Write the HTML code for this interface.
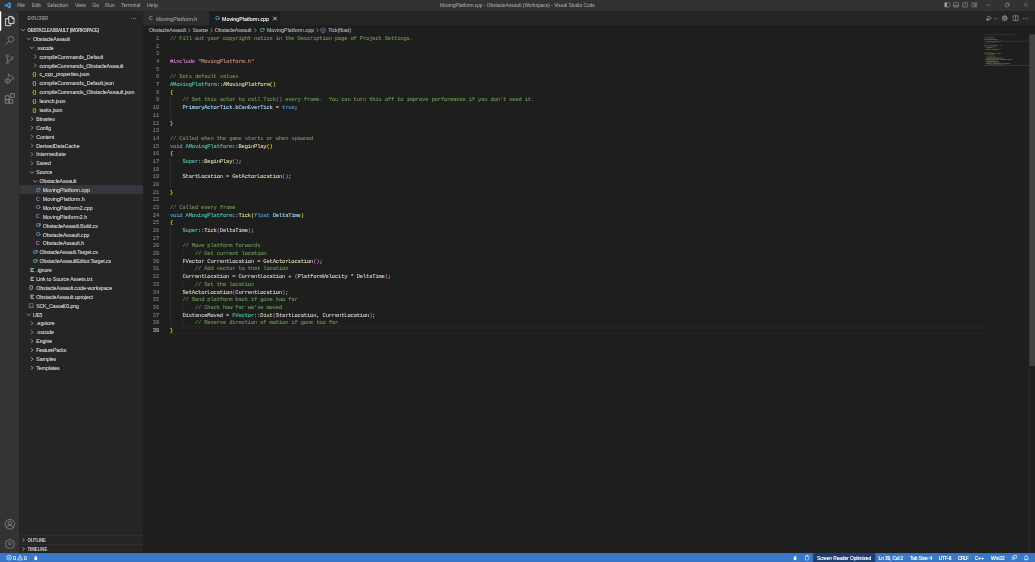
<!DOCTYPE html>
<html><head><meta charset="utf-8"><title>MovingPlatform.cpp - ObstacleAssault (Workspace) - Visual Studio Code</title>
<style>
html,body{margin:0;padding:0;background:#1e1e1e;overflow:hidden;width:1035px;height:562px}
#root{position:absolute;left:0;top:0;width:2560px;height:1390px;transform:scale(0.404296875);transform-origin:0 0;
 font-family:"Liberation Sans",sans-serif;font-size:13px;color:#cccccc;overflow:hidden;background:#1e1e1e}
#fg{position:absolute;left:0;top:0;width:2560px;height:1390px;will-change:opacity}
#root *{box-sizing:border-box}
.abs{position:absolute}
.t{position:absolute;white-space:pre;-webkit-text-stroke:0.35px}
.fi{position:absolute;height:22px;line-height:22px;width:18px;text-align:center;font-weight:bold;font-size:14px;white-space:nowrap}
.fi .sup{font-size:9px;position:relative;top:-3.5px;margin-left:-3.2px;margin-right:-3px;-webkit-text-stroke:0.5px}
.selrow{position:absolute;left:48px;width:305.5px;height:22px;background:#37373d}
.ln{position:absolute;left:352px;width:41.5px;text-align:right;height:19px;line-height:19px;font-family:"Liberation Mono",monospace;font-size:13.6px;letter-spacing:-0.461px;color:#858585;white-space:pre;margin-top:1px;-webkit-text-stroke:0.15px}
.ln.cur{color:#c6c6c6}
.cl{position:absolute;left:420.5px;height:19px;line-height:19px;font-family:"Liberation Mono",monospace;font-size:13.6px;letter-spacing:-0.461px;white-space:pre;color:#d4d4d4;margin-top:1px;-webkit-text-stroke:0.22px}
.ig{position:absolute;width:1px}
.curline{position:absolute;left:420px;width:2014px;height:19px;border-top:2px solid #282828;border-bottom:2px solid #282828}
</style></head><body><div id="root">
<!-- backgrounds -->
<div class="abs" style="left:0;top:0;width:2560px;height:28px;background:#323233"></div>
<div class="abs" style="left:0;top:28px;width:48px;height:1340px;background:#333333"></div>
<div class="abs" style="left:48px;top:28px;width:305.5px;height:1340px;background:#252526"></div>
<div class="abs" style="left:0;top:1368px;width:2560px;height:22px;background:#3a78c8"></div>
<div class="abs" style="left:2434px;top:161px;width:112px;height:2px;background:#23456a"></div>
<div class="abs" style="left:2546px;top:85px;width:1px;height:1283px;background:#3c3c3c"></div>
<div class="abs" style="left:2546px;top:85px;width:14px;height:820px;background:#424242"></div>
<div class="abs" style="left:0;top:28px;width:2.5px;height:48px;background:#ffffff"></div>
<div class="selrow" style="top:458.30px"></div>
<div class="abs" style="left:48px;top:1324px;width:305px;height:1px;background:#3c3c3c"></div>
<div class="abs" style="left:48px;top:1346px;width:305px;height:1px;background:#3c3c3c"></div>
<div class="abs" style="left:352px;top:28px;width:2208px;height:34.5px;background:#252526"></div>
<div class="abs" style="left:353.5px;top:28px;width:163.2px;height:34.5px;background:#2d2d2d"></div>
<div class="abs" style="left:517.5px;top:28px;width:175.3px;height:35.5px;background:#1e1e1e"></div>
<div class="curline" style="top:807px"></div>
<div class="abs" style="left:2010.7px;top:1368px;width:154.1px;height:22px;background:#1f3f6e"></div>
<div id="fg">
<!-- title bar -->
<svg class="abs" style="left:10.5px;top:5.0px" width="16.5" height="16.5" viewBox="0 0 100 100"><path d="M72 3 L96 14 V86 L72 97 L29 58 L11 72 L4 68 V32 L11 28 L29 42 Z M72 30 L44 50 L72 70 Z" fill="#3b9ff0" fill-rule="evenodd"/></svg>
<span class="t" style="left:42.5px;top:0.00px;height:27px;line-height:27px;font-size:13px;color:#a6a6a6;letter-spacing:-0.414px;-webkit-text-stroke:0.1px;">File</span>
<span class="t" style="left:78.9px;top:0.00px;height:27px;line-height:27px;font-size:13px;color:#a6a6a6;letter-spacing:-0.159px;-webkit-text-stroke:0.1px;">Edit</span>
<span class="t" style="left:116.3px;top:0.00px;height:27px;line-height:27px;font-size:13px;color:#a6a6a6;letter-spacing:-0.143px;-webkit-text-stroke:0.1px;">Selection</span>
<span class="t" style="left:185.5px;top:0.00px;height:27px;line-height:27px;font-size:13px;color:#a6a6a6;letter-spacing:-0.431px;-webkit-text-stroke:0.1px;">View</span>
<span class="t" style="left:228.1px;top:0.00px;height:27px;line-height:27px;font-size:13px;color:#a6a6a6;letter-spacing:-0.014px;-webkit-text-stroke:0.1px;">Go</span>
<span class="t" style="left:260.5px;top:0.00px;height:27px;line-height:27px;font-size:13px;color:#a6a6a6;letter-spacing:-0.364px;-webkit-text-stroke:0.1px;">Run</span>
<span class="t" style="left:299.0px;top:0.00px;height:27px;line-height:27px;font-size:13px;color:#a6a6a6;letter-spacing:-0.112px;-webkit-text-stroke:0.1px;">Terminal</span>
<span class="t" style="left:363.6px;top:0.00px;height:27px;line-height:27px;font-size:13px;color:#a6a6a6;letter-spacing:0.056px;-webkit-text-stroke:0.1px;">Help</span>
<span class="t" style="left:1088.6px;top:0.00px;height:27px;line-height:27px;font-size:12px;color:#a6a6a6;letter-spacing:-0.061px;-webkit-text-stroke:0.1px;">MovingPlatform.cpp - ObstacleAssault (Workspace) - Visual Studio Code</span>
<svg class="abs" style="left:2334.6px;top:4.3px" width="16" height="16" viewBox="0 0 16 16"><rect x="1.6" y="2.6" width="12.8" height="10.8" rx="1" fill="none" stroke="#a6a6a6" stroke-width="1.2"/><rect x="2" y="3" width="5" height="10" fill="#a6a6a6"/></svg>
<svg class="abs" style="left:2356.9px;top:4.3px" width="16" height="16" viewBox="0 0 16 16"><rect x="1.6" y="2.6" width="12.8" height="10.8" rx="1" fill="none" stroke="#a6a6a6" stroke-width="1.2"/><path d="M2 9.2h12" stroke="#a6a6a6" stroke-width="1.1"/><rect x="2" y="9.5" width="12" height="3.5" fill="#a6a6a6" opacity="0.35"/></svg>
<svg class="abs" style="left:2379.0px;top:4.3px" width="16" height="16" viewBox="0 0 16 16"><rect x="1.6" y="2.6" width="12.8" height="10.8" rx="1" fill="none" stroke="#a6a6a6" stroke-width="1.2"/><path d="M8 3v10" stroke="#a6a6a6" stroke-width="1.2"/></svg>
<svg class="abs" style="left:2401.5px;top:4.3px" width="16" height="16" viewBox="0 0 16 16"><path d="M2 3h5.5v10H2zM10 3h4v3.6h-4zM10 9.4h4V13h-4z M7.5 8h2.5" fill="none" stroke="#a6a6a6" stroke-width="1.2"/></svg>
<svg class="abs" style="left:2436.7px;top:3.8px" width="16" height="16" viewBox="0 0 16 16"><path d="M3 8.5h10" stroke="#a6a6a6" stroke-width="1.1"/></svg>
<svg class="abs" style="left:2482.7px;top:3.8px" width="16" height="16" viewBox="0 0 16 16"><rect x="3.5" y="5.5" width="7.5" height="7.5" rx="1.2" fill="none" stroke="#a6a6a6" stroke-width="1.1"/><path d="M5.8 5.5V4.5a1.3 1.3 0 0 1 1.3-1.3h5a1.3 1.3 0 0 1 1.3 1.3v5a1.3 1.3 0 0 1-1.3 1.3H11" fill="none" stroke="#a6a6a6" stroke-width="1.1"/></svg>
<svg class="abs" style="left:2528.7px;top:3.8px" width="16" height="16" viewBox="0 0 16 16"><path d="M3 3l10 10M13 3L3 13" stroke="#a6a6a6" stroke-width="1.1"/></svg>
<!-- activity bar -->
<svg class="abs" style="left:10.0px;top:37.7px" width="28" height="28" viewBox="0 0 24 24"><path d="M10 2.200h7l4.200 4.200V17H10z M16.800 2.200v4.400h4.400" fill="none" stroke="#ffffff" stroke-width="1.700"/><path d="M10 7.200H3.200v14.600h11v-4.600" fill="none" stroke="#ffffff" stroke-width="1.700"/></svg>
<svg class="abs" style="left:10.0px;top:85.9px" width="28" height="28" viewBox="0 0 24 24"><circle cx="14.5" cy="9.5" r="6" fill="none" stroke="#929292" stroke-width="1.5"/><path d="M10.3 13.8L3 21.5" stroke="#929292" stroke-width="1.5"/></svg>
<svg class="abs" style="left:10.0px;top:132.9px" width="28" height="28" viewBox="0 0 24 24"><circle cx="7" cy="5" r="2.4" fill="none" stroke="#929292" stroke-width="1.4"/><circle cx="7" cy="19" r="2.4" fill="none" stroke="#929292" stroke-width="1.4"/><circle cx="17.5" cy="8.5" r="2.4" fill="none" stroke="#929292" stroke-width="1.4"/><path d="M7 7.4v9.2M17.5 10.9c0 3.5-10.5 2.5-10.5 5.7" fill="none" stroke="#929292" stroke-width="1.4"/></svg>
<svg class="abs" style="left:10.0px;top:180.4px" width="28" height="28" viewBox="0 0 24 24"><path d="M9 9.500V2.800L21.500 11.500 13.500 17" fill="none" stroke="#929292" stroke-width="1.500"/><rect x="3.500" y="13" width="8.200" height="8.800" rx="2.500" fill="none" stroke="#929292" stroke-width="1.600"/><path d="M7.600 13v8.800M1.800 14.500l1.800 1.200M13.400 14.500l-1.800 1.200M1.800 21l1.800-1.200M13.400 21l-1.800-1.200" stroke="#929292" stroke-width="1.100"/></svg>
<svg class="abs" style="left:10.0px;top:229.4px" width="28" height="28" viewBox="0 0 24 24"><path d="M2.500 6.800h8.200v8.200H2.500zM2.500 15h8.200v7.500H2.500zM10.700 15h8v7.500h-8zM13.500 2.200h8.300v8.300H13.500z" fill="none" stroke="#929292" stroke-width="1.600"/></svg>
<svg class="abs" style="left:9.5px;top:1281.8px" width="29" height="29" viewBox="0 0 24 24"><circle cx="12" cy="12" r="9.8" fill="none" stroke="#929292" stroke-width="1.5"/><circle cx="12" cy="9.5" r="3.6" fill="none" stroke="#929292" stroke-width="1.5"/><path d="M5 19c1.3-3.4 4-4.6 7-4.6s5.700 1.200 7 4.600" fill="none" stroke="#929292" stroke-width="1.5"/></svg>
<svg class="abs" style="left:10.5px;top:1330.6px" width="27" height="27" viewBox="0 0 24 24"><circle cx="12" cy="12" r="3" fill="none" stroke="#929292" stroke-width="1.4"/><path d="M10.3 2.500h3.400l.5 2.800 1.900.8 2.400-1.600 2.400 2.400-1.600 2.400.8 1.900 2.800.5v3.400l-2.800.5-.8 1.900 1.600 2.400-2.400 2.400-2.400-1.600-1.900.8-.5 2.800h-3.400l-.5-2.800-1.900-.8-2.400 1.600-2.400-2.400 1.600-2.400-.8-1.900-2.800-.5v-3.400l2.800-.5.8-1.900-1.600-2.400 2.400-2.400 2.400 1.600 1.900-.8z" fill="none" stroke="#929292" stroke-width="1.4"/></svg>
<!-- side bar -->
<span class="t" style="left:68.0px;top:29.00px;height:35px;line-height:35px;font-size:11px;color:#a0a0a0;letter-spacing:-1.151px;-webkit-text-stroke:0.1px;">EXPLORER</span>
<svg class="abs" style="left:322.2px;top:37.5px" width="16" height="16" viewBox="0 0 16 16"><circle cx="3" cy="8" r="1.200" fill="#c5c5c5"/><circle cx="8" cy="8" r="1.200" fill="#c5c5c5"/><circle cx="13" cy="8" r="1.200" fill="#c5c5c5"/></svg>
<svg class="abs" style="left:49.4px;top:65.5px" width="16" height="16" viewBox="0 0 16 16"><path d="M3.3 5.8 L8 10.5 L12.7 5.8" fill="none" stroke="#c5c5c5" stroke-width="1.7"/></svg>
<span class="t" style="left:68.0px;top:64.00px;height:23px;line-height:23px;font-size:11px;color:#cccccc;letter-spacing:-0.602px;font-weight:bold;-webkit-text-stroke:0.2px;">OBSTACLEASSAULT (WORKSPACE)</span>
<svg class="abs" style="left:63.2px;top:88.3px" width="16" height="16" viewBox="0 0 16 16"><path d="M3.3 5.8 L8 10.5 L12.7 5.8" fill="none" stroke="#c5c5c5" stroke-width="1.7"/></svg>
<span class="t" style="left:81.6px;top:86.10px;height:22px;line-height:22px;font-size:13px;color:#cccccc;letter-spacing:-0.160px;">ObstacleAssault</span>
<svg class="abs" style="left:71.2px;top:110.3px" width="16" height="16" viewBox="0 0 16 16"><path d="M3.3 5.8 L8 10.5 L12.7 5.8" fill="none" stroke="#c5c5c5" stroke-width="1.7"/></svg>
<span class="t" style="left:89.6px;top:108.10px;height:22px;line-height:22px;font-size:13px;color:#cccccc;letter-spacing:-0.226px;">.vscode</span>
<svg class="abs" style="left:79.2px;top:132.3px" width="16" height="16" viewBox="0 0 16 16"><path d="M5.8 3.3 L10.5 8 L5.8 12.7" fill="none" stroke="#c5c5c5" stroke-width="1.7"/></svg>
<span class="t" style="left:97.6px;top:130.10px;height:22px;line-height:22px;font-size:13px;color:#cccccc;letter-spacing:-0.088px;">compileCommands_Default</span>
<svg class="abs" style="left:79.2px;top:154.3px" width="16" height="16" viewBox="0 0 16 16"><path d="M5.8 3.3 L10.5 8 L5.8 12.7" fill="none" stroke="#c5c5c5" stroke-width="1.7"/></svg>
<span class="t" style="left:97.6px;top:152.10px;height:22px;line-height:22px;font-size:13px;color:#cccccc;letter-spacing:-0.163px;">compileCommands_ObstacleAssault</span>
<span class="fi" style="left:76.4px;top:172.8px;color:#cbcb41;letter-spacing:0.8px;font-size:13px;font-weight:normal;-webkit-text-stroke:0.4px">{}</span>
<span class="t" style="left:97.6px;top:174.10px;height:22px;line-height:22px;font-size:13px;color:#cccccc;letter-spacing:-0.175px;">c_cpp_properties.json</span>
<span class="fi" style="left:76.4px;top:194.8px;color:#cbcb41;letter-spacing:0.8px;font-size:13px;font-weight:normal;-webkit-text-stroke:0.4px">{}</span>
<span class="t" style="left:97.6px;top:196.10px;height:22px;line-height:22px;font-size:13px;color:#cccccc;letter-spacing:-0.099px;">compileCommands_Default.json</span>
<span class="fi" style="left:76.4px;top:216.8px;color:#cbcb41;letter-spacing:0.8px;font-size:13px;font-weight:normal;-webkit-text-stroke:0.4px">{}</span>
<span class="t" style="left:97.6px;top:218.10px;height:22px;line-height:22px;font-size:13px;color:#cccccc;letter-spacing:-0.147px;">compileCommands_ObstacleAssault.json</span>
<span class="fi" style="left:76.4px;top:238.8px;color:#cbcb41;letter-spacing:0.8px;font-size:13px;font-weight:normal;-webkit-text-stroke:0.4px">{}</span>
<span class="t" style="left:97.6px;top:240.10px;height:22px;line-height:22px;font-size:13px;color:#cccccc;letter-spacing:-0.149px;">launch.json</span>
<span class="fi" style="left:76.4px;top:260.8px;color:#cbcb41;letter-spacing:0.8px;font-size:13px;font-weight:normal;-webkit-text-stroke:0.4px">{}</span>
<span class="t" style="left:97.6px;top:262.10px;height:22px;line-height:22px;font-size:13px;color:#cccccc;letter-spacing:-0.145px;">tasks.json</span>
<svg class="abs" style="left:71.2px;top:286.3px" width="16" height="16" viewBox="0 0 16 16"><path d="M5.8 3.3 L10.5 8 L5.8 12.7" fill="none" stroke="#c5c5c5" stroke-width="1.7"/></svg>
<span class="t" style="left:89.6px;top:284.10px;height:22px;line-height:22px;font-size:13px;color:#cccccc;letter-spacing:-0.147px;">Binaries</span>
<svg class="abs" style="left:71.2px;top:308.3px" width="16" height="16" viewBox="0 0 16 16"><path d="M5.8 3.3 L10.5 8 L5.8 12.7" fill="none" stroke="#c5c5c5" stroke-width="1.7"/></svg>
<span class="t" style="left:89.6px;top:306.10px;height:22px;line-height:22px;font-size:13px;color:#cccccc;letter-spacing:-0.157px;">Config</span>
<svg class="abs" style="left:71.2px;top:330.3px" width="16" height="16" viewBox="0 0 16 16"><path d="M5.8 3.3 L10.5 8 L5.8 12.7" fill="none" stroke="#c5c5c5" stroke-width="1.7"/></svg>
<span class="t" style="left:89.6px;top:328.10px;height:22px;line-height:22px;font-size:13px;color:#cccccc;letter-spacing:-0.163px;">Content</span>
<svg class="abs" style="left:71.2px;top:352.3px" width="16" height="16" viewBox="0 0 16 16"><path d="M5.8 3.3 L10.5 8 L5.8 12.7" fill="none" stroke="#c5c5c5" stroke-width="1.7"/></svg>
<span class="t" style="left:89.6px;top:350.10px;height:22px;line-height:22px;font-size:13px;color:#cccccc;letter-spacing:-0.172px;">DerivedDataCache</span>
<svg class="abs" style="left:71.2px;top:374.3px" width="16" height="16" viewBox="0 0 16 16"><path d="M5.8 3.3 L10.5 8 L5.8 12.7" fill="none" stroke="#c5c5c5" stroke-width="1.7"/></svg>
<span class="t" style="left:89.6px;top:372.10px;height:22px;line-height:22px;font-size:13px;color:#cccccc;letter-spacing:0.095px;">Intermediate</span>
<svg class="abs" style="left:71.2px;top:396.3px" width="16" height="16" viewBox="0 0 16 16"><path d="M5.8 3.3 L10.5 8 L5.8 12.7" fill="none" stroke="#c5c5c5" stroke-width="1.7"/></svg>
<span class="t" style="left:89.6px;top:394.10px;height:22px;line-height:22px;font-size:13px;color:#cccccc;letter-spacing:-0.184px;">Saved</span>
<svg class="abs" style="left:71.2px;top:418.3px" width="16" height="16" viewBox="0 0 16 16"><path d="M3.3 5.8 L8 10.5 L12.7 5.8" fill="none" stroke="#c5c5c5" stroke-width="1.7"/></svg>
<span class="t" style="left:89.6px;top:416.10px;height:22px;line-height:22px;font-size:13px;color:#cccccc;letter-spacing:-0.239px;">Source</span>
<svg class="abs" style="left:79.2px;top:440.3px" width="16" height="16" viewBox="0 0 16 16"><path d="M3.3 5.8 L8 10.5 L12.7 5.8" fill="none" stroke="#c5c5c5" stroke-width="1.7"/></svg>
<span class="t" style="left:97.6px;top:438.10px;height:22px;line-height:22px;font-size:13px;color:#cccccc;letter-spacing:-0.187px;">ObstacleAssault</span>
<span class="fi" style="left:84.4px;top:458.1px;color:#519aba">C<span class="sup">+</span></span>
<span class="t" style="left:105.6px;top:460.10px;height:22px;line-height:22px;font-size:13px;color:#cccccc;letter-spacing:0.132px;">MovingPlatform.cpp</span>
<span class="fi" style="left:84.4px;top:480.1px;color:#a074c4">C</span>
<span class="t" style="left:105.6px;top:482.10px;height:22px;line-height:22px;font-size:13px;color:#cccccc;letter-spacing:0.187px;">MovingPlatform.h</span>
<span class="fi" style="left:84.4px;top:502.1px;color:#519aba">C<span class="sup">+</span></span>
<span class="t" style="left:105.6px;top:504.10px;height:22px;line-height:22px;font-size:13px;color:#cccccc;letter-spacing:0.096px;">MovingPlatform2.cpp</span>
<span class="fi" style="left:84.4px;top:524.1px;color:#a074c4">C</span>
<span class="t" style="left:105.6px;top:526.10px;height:22px;line-height:22px;font-size:13px;color:#cccccc;letter-spacing:0.085px;">MovingPlatform2.h</span>
<span class="fi" style="left:84.4px;top:546.1px;color:#519aba">C<span class="sup">#</span></span>
<span class="t" style="left:105.6px;top:548.10px;height:22px;line-height:22px;font-size:13px;color:#cccccc;letter-spacing:-0.282px;">ObstacleAssault.Build.cs</span>
<span class="fi" style="left:84.4px;top:568.1px;color:#519aba">C<span class="sup">+</span></span>
<span class="t" style="left:105.6px;top:570.10px;height:22px;line-height:22px;font-size:13px;color:#cccccc;letter-spacing:-0.156px;">ObstacleAssault.cpp</span>
<span class="fi" style="left:84.4px;top:590.1px;color:#a074c4">C</span>
<span class="t" style="left:105.6px;top:592.10px;height:22px;line-height:22px;font-size:13px;color:#cccccc;letter-spacing:-0.154px;">ObstacleAssault.h</span>
<span class="fi" style="left:76.4px;top:612.1px;color:#519aba">C<span class="sup">#</span></span>
<span class="t" style="left:97.6px;top:614.10px;height:22px;line-height:22px;font-size:13px;color:#cccccc;letter-spacing:-0.240px;">ObstacleAssault.Target.cs</span>
<span class="fi" style="left:76.4px;top:634.1px;color:#519aba">C<span class="sup">#</span></span>
<span class="t" style="left:97.6px;top:636.10px;height:22px;line-height:22px;font-size:13px;color:#cccccc;letter-spacing:-0.204px;">ObstacleAssaultEditor.Target.cs</span>
<svg class="abs" style="left:72.0px;top:660.3px" width="16" height="16" viewBox="0 0 16 16"><path d="M4 4.200h8.500M4 8h5.500M4 11.800h8.500" stroke="#d4d7d6" stroke-width="1.900" fill="none"/><path d="M4.600 3.500v9" stroke="#d4d7d6" stroke-width="1.200"/></svg>
<span class="t" style="left:89.6px;top:658.10px;height:22px;line-height:22px;font-size:13px;color:#cccccc;letter-spacing:-0.142px;">.ignore</span>
<svg class="abs" style="left:72.0px;top:682.3px" width="16" height="16" viewBox="0 0 16 16"><path d="M4 4.200h8.500M4 8h5.500M4 11.800h8.500" stroke="#d4d7d6" stroke-width="1.900" fill="none"/><path d="M4.600 3.500v9" stroke="#d4d7d6" stroke-width="1.200"/></svg>
<span class="t" style="left:89.6px;top:680.10px;height:22px;line-height:22px;font-size:13px;color:#cccccc;letter-spacing:-0.142px;">Link to Source Assets.txt</span>
<span class="fi" style="left:68.4px;top:700.8px;color:#cbcb41;letter-spacing:0.8px;font-size:13px;font-weight:normal;-webkit-text-stroke:0.4px">{}</span>
<span class="t" style="left:89.6px;top:702.10px;height:22px;line-height:22px;font-size:13px;color:#cccccc;letter-spacing:-0.160px;">ObstacleAssault.code-workspace</span>
<svg class="abs" style="left:72.0px;top:726.3px" width="16" height="16" viewBox="0 0 16 16"><path d="M4 4.200h8.500M4 8h5.500M4 11.800h8.500" stroke="#d4d7d6" stroke-width="1.900" fill="none"/><path d="M4.600 3.500v9" stroke="#d4d7d6" stroke-width="1.200"/></svg>
<span class="t" style="left:89.6px;top:724.10px;height:22px;line-height:22px;font-size:13px;color:#cccccc;letter-spacing:-0.150px;">ObstacleAssault.uproject</span>
<svg class="abs" style="left:69.4px;top:748.3px" width="16" height="16" viewBox="0 0 16 16"><rect x="3" y="3.5" width="10" height="9.5" fill="none" stroke="#a074c4" stroke-width="1.6"/><path d="M3 11.5l3-3 3 3 1.5-1.5 2.5 2.5" stroke="#a074c4" stroke-width="1.3" fill="none"/></svg>
<span class="t" style="left:89.6px;top:746.10px;height:22px;line-height:22px;font-size:13px;color:#cccccc;letter-spacing:-0.571px;">SCK_Casual01.png</span>
<svg class="abs" style="left:63.2px;top:770.3px" width="16" height="16" viewBox="0 0 16 16"><path d="M3.3 5.8 L8 10.5 L12.7 5.8" fill="none" stroke="#c5c5c5" stroke-width="1.7"/></svg>
<span class="t" style="left:81.6px;top:768.10px;height:22px;line-height:22px;font-size:13px;color:#cccccc;letter-spacing:-0.837px;">UE5</span>
<svg class="abs" style="left:71.2px;top:792.3px" width="16" height="16" viewBox="0 0 16 16"><path d="M5.8 3.3 L10.5 8 L5.8 12.7" fill="none" stroke="#c5c5c5" stroke-width="1.7"/></svg>
<span class="t" style="left:89.6px;top:790.10px;height:22px;line-height:22px;font-size:13px;color:#cccccc;letter-spacing:-0.147px;">.egstore</span>
<svg class="abs" style="left:71.2px;top:814.3px" width="16" height="16" viewBox="0 0 16 16"><path d="M5.8 3.3 L10.5 8 L5.8 12.7" fill="none" stroke="#c5c5c5" stroke-width="1.7"/></svg>
<span class="t" style="left:89.6px;top:812.10px;height:22px;line-height:22px;font-size:13px;color:#cccccc;letter-spacing:-0.160px;">.vscode</span>
<svg class="abs" style="left:71.2px;top:836.3px" width="16" height="16" viewBox="0 0 16 16"><path d="M5.8 3.3 L10.5 8 L5.8 12.7" fill="none" stroke="#c5c5c5" stroke-width="1.7"/></svg>
<span class="t" style="left:89.6px;top:834.10px;height:22px;line-height:22px;font-size:13px;color:#cccccc;letter-spacing:-0.169px;">Engine</span>
<svg class="abs" style="left:71.2px;top:858.3px" width="16" height="16" viewBox="0 0 16 16"><path d="M5.8 3.3 L10.5 8 L5.8 12.7" fill="none" stroke="#c5c5c5" stroke-width="1.7"/></svg>
<span class="t" style="left:89.6px;top:856.10px;height:22px;line-height:22px;font-size:13px;color:#cccccc;letter-spacing:-0.505px;">FeaturePacks</span>
<svg class="abs" style="left:71.2px;top:880.3px" width="16" height="16" viewBox="0 0 16 16"><path d="M5.8 3.3 L10.5 8 L5.8 12.7" fill="none" stroke="#c5c5c5" stroke-width="1.7"/></svg>
<span class="t" style="left:89.6px;top:878.10px;height:22px;line-height:22px;font-size:13px;color:#cccccc;letter-spacing:-0.181px;">Samples</span>
<svg class="abs" style="left:71.2px;top:902.3px" width="16" height="16" viewBox="0 0 16 16"><path d="M5.8 3.3 L10.5 8 L5.8 12.7" fill="none" stroke="#c5c5c5" stroke-width="1.7"/></svg>
<span class="t" style="left:89.6px;top:900.10px;height:22px;line-height:22px;font-size:13px;color:#cccccc;letter-spacing:-0.165px;">Templates</span>
<svg class="abs" style="left:50.1px;top:1328.0px" width="16" height="16" viewBox="0 0 16 16"><path d="M5.8 3.3 L10.5 8 L5.8 12.7" fill="none" stroke="#c5c5c5" stroke-width="1.7"/></svg>
<svg class="abs" style="left:50.1px;top:1350.0px" width="16" height="16" viewBox="0 0 16 16"><path d="M5.8 3.3 L10.5 8 L5.8 12.7" fill="none" stroke="#c5c5c5" stroke-width="1.7"/></svg>
<span class="t" style="left:68.0px;top:1325.50px;height:22px;line-height:22px;font-size:11px;color:#cccccc;letter-spacing:-0.395px;font-weight:bold;-webkit-text-stroke:0px;">OUTLINE</span>
<span class="t" style="left:68.0px;top:1347.50px;height:22px;line-height:22px;font-size:11px;color:#cccccc;letter-spacing:-0.295px;font-weight:bold;-webkit-text-stroke:0px;">TIMELINE</span>
<!-- tabs + breadcrumbs -->
<span class="fi" style="left:364.2px;top:33.3px;color:#a074c4">C</span>
<span class="t" style="left:386.3px;top:29.00px;height:35px;line-height:35px;font-size:13px;color:#969696;letter-spacing:0.016px;">MovingPlatform.h</span>
<span class="fi" style="left:528.2px;top:33.3px;color:#519aba">C<span class="sup">+</span></span>
<span class="t" style="left:549.3px;top:29.00px;height:35px;line-height:35px;font-size:13px;color:#ffffff;letter-spacing:0.062px;-webkit-text-stroke:0.2px;">MovingPlatform.cpp</span>
<svg class="abs" style="left:671.7px;top:37.5px" width="16" height="16" viewBox="0 0 16 16"><path d="M3.6 3.6l8.8 8.8M12.400 3.600l-8.800 8.800" stroke="#ffffff" stroke-width="1.800"/></svg>
<svg class="abs" style="left:2437.8px;top:37.4px" width="16" height="16" viewBox="0 0 16 16"><path d="M5.500 6V2.500L14 8 8.500 11.600" fill="none" stroke="#d0d0d0" stroke-width="1.2"/><circle cx="4.8" cy="11.300" r="2.600" fill="none" stroke="#d0d0d0" stroke-width="1.2"/><path d="M4.8 8.700v5.200M1.500 9.800l1.300.8M8.100 9.800l-1.300.8M1.500 13l1.300-.8M8.100 13l-1.300-.8" stroke="#d0d0d0" stroke-width="0.9"/></svg>
<svg class="abs" style="left:2457.0px;top:40.4px" width="11" height="11" viewBox="0 0 16 16"><path d="M3.300 5.800 L8 10.500 L12.700 5.800" fill="none" stroke="#d0d0d0" stroke-width="1.6"/></svg>
<svg class="abs" style="left:2477.2px;top:37.4px" width="16" height="16" viewBox="0 0 16 16"><circle cx="8" cy="8" r="2" fill="none" stroke="#d0d0d0" stroke-width="1.2"/><circle cx="8" cy="8" r="5.300" fill="none" stroke="#d0d0d0" stroke-width="1.500"/><path d="M8 .8v2M8 13.200v2M.8 8h2M13.200 8h2M2.900 2.900l1.400 1.400M11.700 11.700l1.400 1.400M2.900 13.100l1.400-1.400M11.700 4.300l1.400-1.400" stroke="#d0d0d0" stroke-width="1.500"/></svg>
<svg class="abs" style="left:2503.5px;top:37.4px" width="16" height="16" viewBox="0 0 16 16"><rect x="1.600" y="2.100" width="12.800" height="11.800" rx="1" fill="none" stroke="#d0d0d0" stroke-width="1.200"/><path d="M8 2.500v11" stroke="#d0d0d0" stroke-width="1.200"/></svg>
<svg class="abs" style="left:2529.3px;top:37.4px" width="16" height="16" viewBox="0 0 16 16"><circle cx="3" cy="8" r="1.200" fill="#d0d0d0"/><circle cx="8" cy="8" r="1.200" fill="#d0d0d0"/><circle cx="13" cy="8" r="1.200" fill="#d0d0d0"/></svg>
<span class="t" style="left:368.5px;top:64.50px;height:22px;line-height:22px;font-size:13px;color:#a9a9a9;letter-spacing:-0.145px;">ObstacleAssault</span>
<svg class="abs" style="left:459.7px;top:67.0px" width="16" height="16" viewBox="0 0 16 16"><path d="M5.8 3.3 L10.5 8 L5.8 12.7" fill="none" stroke="#a9a9a9" stroke-width="1.7"/></svg>
<span class="t" style="left:476.1px;top:64.50px;height:22px;line-height:22px;font-size:13px;color:#a9a9a9;letter-spacing:-0.558px;">Source</span>
<svg class="abs" style="left:514.9px;top:67.0px" width="16" height="16" viewBox="0 0 16 16"><path d="M5.8 3.3 L10.5 8 L5.8 12.7" fill="none" stroke="#a9a9a9" stroke-width="1.7"/></svg>
<span class="t" style="left:531.3px;top:64.50px;height:22px;line-height:22px;font-size:13px;color:#a9a9a9;letter-spacing:-0.227px;">ObstacleAssault</span>
<svg class="abs" style="left:622.7px;top:67.0px" width="16" height="16" viewBox="0 0 16 16"><path d="M5.8 3.3 L10.5 8 L5.8 12.7" fill="none" stroke="#a9a9a9" stroke-width="1.7"/></svg>
<span class="fi" style="left:639.0px;top:62.8px;color:#519aba">C<span class="sup">+</span></span>
<span class="t" style="left:660.2px;top:64.50px;height:22px;line-height:22px;font-size:13px;color:#a9a9a9;letter-spacing:0.103px;">MovingPlatform.cpp</span>
<svg class="abs" style="left:776.8px;top:67.0px" width="16" height="16" viewBox="0 0 16 16"><path d="M5.8 3.3 L10.5 8 L5.8 12.7" fill="none" stroke="#a9a9a9" stroke-width="1.7"/></svg>
<svg class="abs" style="left:791.4px;top:67.0px" width="16" height="16" viewBox="0 0 16 16"><path d="M8 1.500l5.600 3.200v6.600L8 14.500l-5.600-3.200V4.700z M2.400 4.700L8 8l5.600-3.300M8 8v6.500" fill="none" stroke="#b180d7" stroke-width="1.200"/></svg>
<span class="t" style="left:812.0px;top:64.50px;height:22px;line-height:22px;font-size:13px;color:#a9a9a9;letter-spacing:-0.062px;">Tick(float)</span>
<!-- editor -->
<span class="ln" style="top:85px">1</span>
<div class="cl" style="top:85px"><span style="color:#6a9955">// Fill out your copyright notice in the Description page of Project Settings.</span></div>
<span class="ln" style="top:104px">2</span>
<span class="ln" style="top:123px">3</span>
<span class="ln" style="top:142px">4</span>
<div class="cl" style="top:142px"><span style="color:#c586c0">#include</span><span style="color:#d4d4d4"> </span><span style="color:#ce9178">"MovingPlatform.h"</span></div>
<span class="ln" style="top:161px">5</span>
<span class="ln" style="top:180px">6</span>
<div class="cl" style="top:180px"><span style="color:#6a9955">// Sets default values</span></div>
<span class="ln" style="top:199px">7</span>
<div class="cl" style="top:199px"><span style="color:#4ec9b0">AMovingPlatform</span><span style="color:#d4d4d4">::</span><span style="color:#dcdcaa">AMovingPlatform</span><span style="color:#ffd700">()</span></div>
<span class="ln" style="top:218px">8</span>
<div class="cl" style="top:218px"><span style="color:#ffd700">{</span></div>
<span class="ln" style="top:237px">9</span>
<div class="cl" style="top:237px"><span style="color:#d4d4d4">    </span><span style="color:#6a9955">// Set this actor to call Tick() every frame.  You can turn this off to improve performance if you don't need it.</span></div>
<span class="ln" style="top:256px">10</span>
<div class="cl" style="top:256px"><span style="color:#d4d4d4">    </span><span style="color:#9cdcfe">PrimaryActorTick</span><span style="color:#d4d4d4">.</span><span style="color:#9cdcfe">bCanEverTick</span><span style="color:#d4d4d4"> = </span><span style="color:#569cd6">true</span><span style="color:#d4d4d4">;</span></div>
<span class="ln" style="top:275px">11</span>
<span class="ln" style="top:294px">12</span>
<div class="cl" style="top:294px"><span style="color:#ffd700">}</span></div>
<span class="ln" style="top:313px">13</span>
<span class="ln" style="top:332px">14</span>
<div class="cl" style="top:332px"><span style="color:#6a9955">// Called when the game starts or when spawned</span></div>
<span class="ln" style="top:351px">15</span>
<div class="cl" style="top:351px"><span style="color:#569cd6">void</span><span style="color:#d4d4d4"> </span><span style="color:#4ec9b0">AMovingPlatform</span><span style="color:#d4d4d4">::</span><span style="color:#dcdcaa">BeginPlay</span><span style="color:#ffd700">()</span></div>
<span class="ln" style="top:370px">16</span>
<div class="cl" style="top:370px"><span style="color:#ffd700">{</span></div>
<span class="ln" style="top:389px">17</span>
<div class="cl" style="top:389px"><span style="color:#d4d4d4">    </span><span style="color:#4ec9b0">Super</span><span style="color:#d4d4d4">::</span><span style="color:#dcdcaa">BeginPlay</span><span style="color:#da70d6">()</span><span style="color:#d4d4d4">;</span></div>
<span class="ln" style="top:408px">18</span>
<span class="ln" style="top:427px">19</span>
<div class="cl" style="top:427px"><span style="color:#d4d4d4">    </span><span style="color:#d4d4d4">StartLocation</span><span style="color:#d4d4d4"> = </span><span style="color:#dcdcaa">GetActorLocation</span><span style="color:#da70d6">()</span><span style="color:#d4d4d4">;</span></div>
<span class="ln" style="top:446px">20</span>
<span class="ln" style="top:465px">21</span>
<div class="cl" style="top:465px"><span style="color:#ffd700">}</span></div>
<span class="ln" style="top:484px">22</span>
<span class="ln" style="top:503px">23</span>
<div class="cl" style="top:503px"><span style="color:#6a9955">// Called every frame</span></div>
<span class="ln" style="top:522px">24</span>
<div class="cl" style="top:522px"><span style="color:#569cd6">void</span><span style="color:#d4d4d4"> </span><span style="color:#4ec9b0">AMovingPlatform</span><span style="color:#d4d4d4">::</span><span style="color:#dcdcaa">Tick</span><span style="color:#ffd700">(</span><span style="color:#569cd6">float</span><span style="color:#d4d4d4"> </span><span style="color:#9cdcfe">DeltaTime</span><span style="color:#ffd700">)</span></div>
<span class="ln" style="top:541px">25</span>
<div class="cl" style="top:541px"><span style="color:#ffd700">{</span></div>
<span class="ln" style="top:560px">26</span>
<div class="cl" style="top:560px"><span style="color:#d4d4d4">    </span><span style="color:#4ec9b0">Super</span><span style="color:#d4d4d4">::</span><span style="color:#dcdcaa">Tick</span><span style="color:#da70d6">(</span><span style="color:#d4d4d4">DeltaTime</span><span style="color:#da70d6">)</span><span style="color:#d4d4d4">;</span></div>
<span class="ln" style="top:579px">27</span>
<span class="ln" style="top:598px">28</span>
<div class="cl" style="top:598px"><span style="color:#d4d4d4">    </span><span style="color:#6a9955">// Move platform forwards</span></div>
<span class="ln" style="top:617px">29</span>
<div class="cl" style="top:617px"><span style="color:#d4d4d4">        </span><span style="color:#6a9955">// Get current location</span></div>
<span class="ln" style="top:636px">30</span>
<div class="cl" style="top:636px"><span style="color:#d4d4d4">    </span><span style="color:#d4d4d4">FVector </span><span style="color:#d4d4d4">CurrentLocation</span><span style="color:#d4d4d4"> = </span><span style="color:#dcdcaa">GetActorLocation</span><span style="color:#da70d6">()</span><span style="color:#d4d4d4">;</span></div>
<span class="ln" style="top:655px">31</span>
<div class="cl" style="top:655px"><span style="color:#d4d4d4">        </span><span style="color:#6a9955">// Add vector to that location</span></div>
<span class="ln" style="top:674px">32</span>
<div class="cl" style="top:674px"><span style="color:#d4d4d4">    </span><span style="color:#d4d4d4">CurrentLocation</span><span style="color:#d4d4d4"> = </span><span style="color:#d4d4d4">CurrentLocation</span><span style="color:#d4d4d4"> + </span><span style="color:#da70d6">(</span><span style="color:#d4d4d4">PlatformVelocity</span><span style="color:#d4d4d4"> * </span><span style="color:#d4d4d4">DeltaTime</span><span style="color:#da70d6">)</span><span style="color:#d4d4d4">;</span></div>
<span class="ln" style="top:693px">33</span>
<div class="cl" style="top:693px"><span style="color:#d4d4d4">        </span><span style="color:#6a9955">// Set the location</span></div>
<span class="ln" style="top:712px">34</span>
<div class="cl" style="top:712px"><span style="color:#d4d4d4">    </span><span style="color:#dcdcaa">SetActorLocation</span><span style="color:#da70d6">(</span><span style="color:#d4d4d4">CurrentLocation</span><span style="color:#da70d6">)</span><span style="color:#d4d4d4">;</span></div>
<span class="ln" style="top:731px">35</span>
<div class="cl" style="top:731px"><span style="color:#d4d4d4">    </span><span style="color:#6a9955">// Send platform back if gone too far</span></div>
<span class="ln" style="top:750px">36</span>
<div class="cl" style="top:750px"><span style="color:#d4d4d4">        </span><span style="color:#6a9955">// Check how far we've moved</span></div>
<span class="ln" style="top:769px">37</span>
<div class="cl" style="top:769px"><span style="color:#d4d4d4">    </span><span style="color:#d4d4d4">DistanceMoved</span><span style="color:#d4d4d4"> = </span><span style="color:#4ec9b0">FVector</span><span style="color:#d4d4d4">::</span><span style="color:#dcdcaa">Dist</span><span style="color:#da70d6">(</span><span style="color:#d4d4d4">StartLocation</span><span style="color:#d4d4d4">, </span><span style="color:#d4d4d4">CurrentLocation</span><span style="color:#da70d6">)</span><span style="color:#d4d4d4">;</span></div>
<span class="ln" style="top:788px">38</span>
<div class="cl" style="top:788px"><span style="color:#d4d4d4">        </span><span style="color:#6a9955">// Reverse direction of motion if gone too far</span></div>
<span class="ln cur" style="top:807px">39</span>
<div class="cl" style="top:807px"><span style="color:#ffd700">}</span></div>
<div class="ig" style="left:420.5px;top:237px;height:57px;background:#404040"></div>
<div class="ig" style="left:420.5px;top:389px;height:76px;background:#404040"></div>
<div class="ig" style="left:420.5px;top:560px;height:247px;background:#404040"></div>
<div class="ig" style="left:451.3px;top:617px;height:19px;background:#404040"></div>
<div class="ig" style="left:451.3px;top:655px;height:19px;background:#404040"></div>
<div class="ig" style="left:451.3px;top:693px;height:19px;background:#404040"></div>
<div class="ig" style="left:451.3px;top:750px;height:19px;background:#404040"></div>
<div class="ig" style="left:451.3px;top:788px;height:19px;background:#404040"></div>
<svg class="abs" style="left:2434px;top:85px" width="112" height="84" viewBox="0 0 112 84"><rect x="0.0" y="0" width="2.0" height="1.4" fill="#6a9955" opacity="0.5"/><rect x="2.9" y="0" width="3.9" height="1.4" fill="#6a9955" opacity="0.5"/><rect x="7.8" y="0" width="2.9" height="1.4" fill="#6a9955" opacity="0.5"/><rect x="11.8" y="0" width="3.9" height="1.4" fill="#6a9955" opacity="0.5"/><rect x="16.7" y="0" width="8.8" height="1.4" fill="#6a9955" opacity="0.5"/><rect x="26.5" y="0" width="5.9" height="1.4" fill="#6a9955" opacity="0.5"/><rect x="33.3" y="0" width="2.0" height="1.4" fill="#6a9955" opacity="0.5"/><rect x="36.3" y="0" width="2.9" height="1.4" fill="#6a9955" opacity="0.5"/><rect x="40.2" y="0" width="10.8" height="1.4" fill="#6a9955" opacity="0.5"/><rect x="51.9" y="0" width="3.9" height="1.4" fill="#6a9955" opacity="0.5"/><rect x="56.8" y="0" width="2.0" height="1.4" fill="#6a9955" opacity="0.5"/><rect x="59.8" y="0" width="6.9" height="1.4" fill="#6a9955" opacity="0.5"/><rect x="67.6" y="0" width="8.8" height="1.4" fill="#6a9955" opacity="0.5"/><rect x="0.0" y="6" width="7.8" height="1.4" fill="#c586c0" opacity="0.5"/><rect x="8.8" y="6" width="17.6" height="1.4" fill="#ce9178" opacity="0.5"/><rect x="0.0" y="10" width="2.0" height="1.4" fill="#6a9955" opacity="0.5"/><rect x="2.9" y="10" width="3.9" height="1.4" fill="#6a9955" opacity="0.5"/><rect x="7.8" y="10" width="6.9" height="1.4" fill="#6a9955" opacity="0.5"/><rect x="15.7" y="10" width="5.9" height="1.4" fill="#6a9955" opacity="0.5"/><rect x="0.0" y="12" width="14.7" height="1.4" fill="#4ec9b0" opacity="0.5"/><rect x="14.7" y="12" width="2.0" height="1.4" fill="#d4d4d4" opacity="0.5"/><rect x="16.7" y="12" width="14.7" height="1.4" fill="#dcdcaa" opacity="0.5"/><rect x="31.4" y="12" width="2.0" height="1.4" fill="#ffd700" opacity="0.5"/><rect x="0.0" y="14" width="1.0" height="1.4" fill="#ffd700" opacity="0.5"/><rect x="3.9" y="16" width="2.0" height="1.4" fill="#6a9955" opacity="0.5"/><rect x="6.9" y="16" width="2.9" height="1.4" fill="#6a9955" opacity="0.5"/><rect x="10.8" y="16" width="3.9" height="1.4" fill="#6a9955" opacity="0.5"/><rect x="15.7" y="16" width="4.9" height="1.4" fill="#6a9955" opacity="0.5"/><rect x="21.6" y="16" width="2.0" height="1.4" fill="#6a9955" opacity="0.5"/><rect x="24.5" y="16" width="3.9" height="1.4" fill="#6a9955" opacity="0.5"/><rect x="29.4" y="16" width="5.9" height="1.4" fill="#6a9955" opacity="0.5"/><rect x="36.3" y="16" width="4.9" height="1.4" fill="#6a9955" opacity="0.5"/><rect x="42.1" y="16" width="5.9" height="1.4" fill="#6a9955" opacity="0.5"/><rect x="50.0" y="16" width="2.9" height="1.4" fill="#6a9955" opacity="0.5"/><rect x="53.9" y="16" width="2.9" height="1.4" fill="#6a9955" opacity="0.5"/><rect x="57.8" y="16" width="3.9" height="1.4" fill="#6a9955" opacity="0.5"/><rect x="62.7" y="16" width="3.9" height="1.4" fill="#6a9955" opacity="0.5"/><rect x="67.6" y="16" width="2.9" height="1.4" fill="#6a9955" opacity="0.5"/><rect x="71.5" y="16" width="2.0" height="1.4" fill="#6a9955" opacity="0.5"/><rect x="74.5" y="16" width="6.9" height="1.4" fill="#6a9955" opacity="0.5"/><rect x="82.3" y="16" width="10.8" height="1.4" fill="#6a9955" opacity="0.5"/><rect x="94.1" y="16" width="2.0" height="1.4" fill="#6a9955" opacity="0.5"/><rect x="97.0" y="16" width="2.9" height="1.4" fill="#6a9955" opacity="0.5"/><rect x="100.9" y="16" width="4.9" height="1.4" fill="#6a9955" opacity="0.5"/><rect x="106.8" y="16" width="3.9" height="1.4" fill="#6a9955" opacity="0.5"/><rect x="111.7" y="16" width="2.9" height="1.4" fill="#6a9955" opacity="0.5"/><rect x="3.9" y="18" width="15.7" height="1.4" fill="#9cdcfe" opacity="0.5"/><rect x="19.6" y="18" width="1.0" height="1.4" fill="#d4d4d4" opacity="0.5"/><rect x="20.6" y="18" width="11.8" height="1.4" fill="#9cdcfe" opacity="0.5"/><rect x="33.3" y="18" width="1.0" height="1.4" fill="#d4d4d4" opacity="0.5"/><rect x="35.3" y="18" width="3.9" height="1.4" fill="#569cd6" opacity="0.5"/><rect x="39.2" y="18" width="1.0" height="1.4" fill="#d4d4d4" opacity="0.5"/><rect x="0.0" y="22" width="1.0" height="1.4" fill="#ffd700" opacity="0.5"/><rect x="0.0" y="26" width="2.0" height="1.4" fill="#6a9955" opacity="0.5"/><rect x="2.9" y="26" width="5.9" height="1.4" fill="#6a9955" opacity="0.5"/><rect x="9.8" y="26" width="3.9" height="1.4" fill="#6a9955" opacity="0.5"/><rect x="14.7" y="26" width="2.9" height="1.4" fill="#6a9955" opacity="0.5"/><rect x="18.6" y="26" width="3.9" height="1.4" fill="#6a9955" opacity="0.5"/><rect x="23.5" y="26" width="5.9" height="1.4" fill="#6a9955" opacity="0.5"/><rect x="30.4" y="26" width="2.0" height="1.4" fill="#6a9955" opacity="0.5"/><rect x="33.3" y="26" width="3.9" height="1.4" fill="#6a9955" opacity="0.5"/><rect x="38.2" y="26" width="6.9" height="1.4" fill="#6a9955" opacity="0.5"/><rect x="0.0" y="28" width="3.9" height="1.4" fill="#569cd6" opacity="0.5"/><rect x="4.9" y="28" width="14.7" height="1.4" fill="#4ec9b0" opacity="0.5"/><rect x="19.6" y="28" width="2.0" height="1.4" fill="#d4d4d4" opacity="0.5"/><rect x="21.6" y="28" width="8.8" height="1.4" fill="#dcdcaa" opacity="0.5"/><rect x="30.4" y="28" width="2.0" height="1.4" fill="#ffd700" opacity="0.5"/><rect x="0.0" y="30" width="1.0" height="1.4" fill="#ffd700" opacity="0.5"/><rect x="3.9" y="32" width="4.9" height="1.4" fill="#4ec9b0" opacity="0.5"/><rect x="8.8" y="32" width="2.0" height="1.4" fill="#d4d4d4" opacity="0.5"/><rect x="10.8" y="32" width="8.8" height="1.4" fill="#dcdcaa" opacity="0.5"/><rect x="19.6" y="32" width="2.0" height="1.4" fill="#da70d6" opacity="0.5"/><rect x="21.6" y="32" width="1.0" height="1.4" fill="#d4d4d4" opacity="0.5"/><rect x="3.9" y="36" width="12.7" height="1.4" fill="#d4d4d4" opacity="0.5"/><rect x="17.6" y="36" width="1.0" height="1.4" fill="#d4d4d4" opacity="0.5"/><rect x="19.6" y="36" width="15.7" height="1.4" fill="#dcdcaa" opacity="0.5"/><rect x="35.3" y="36" width="2.0" height="1.4" fill="#da70d6" opacity="0.5"/><rect x="37.2" y="36" width="1.0" height="1.4" fill="#d4d4d4" opacity="0.5"/><rect x="0.0" y="40" width="1.0" height="1.4" fill="#ffd700" opacity="0.5"/><rect x="0.0" y="44" width="2.0" height="1.4" fill="#6a9955" opacity="0.5"/><rect x="2.9" y="44" width="5.9" height="1.4" fill="#6a9955" opacity="0.5"/><rect x="9.8" y="44" width="4.9" height="1.4" fill="#6a9955" opacity="0.5"/><rect x="15.7" y="44" width="4.9" height="1.4" fill="#6a9955" opacity="0.5"/><rect x="0.0" y="46" width="3.9" height="1.4" fill="#569cd6" opacity="0.5"/><rect x="4.9" y="46" width="14.7" height="1.4" fill="#4ec9b0" opacity="0.5"/><rect x="19.6" y="46" width="2.0" height="1.4" fill="#d4d4d4" opacity="0.5"/><rect x="21.6" y="46" width="3.9" height="1.4" fill="#dcdcaa" opacity="0.5"/><rect x="25.5" y="46" width="1.0" height="1.4" fill="#ffd700" opacity="0.5"/><rect x="26.5" y="46" width="4.9" height="1.4" fill="#569cd6" opacity="0.5"/><rect x="32.3" y="46" width="8.8" height="1.4" fill="#9cdcfe" opacity="0.5"/><rect x="41.2" y="46" width="1.0" height="1.4" fill="#ffd700" opacity="0.5"/><rect x="0.0" y="48" width="1.0" height="1.4" fill="#ffd700" opacity="0.5"/><rect x="3.9" y="50" width="4.9" height="1.4" fill="#4ec9b0" opacity="0.5"/><rect x="8.8" y="50" width="2.0" height="1.4" fill="#d4d4d4" opacity="0.5"/><rect x="10.8" y="50" width="3.9" height="1.4" fill="#dcdcaa" opacity="0.5"/><rect x="14.7" y="50" width="1.0" height="1.4" fill="#da70d6" opacity="0.5"/><rect x="15.7" y="50" width="8.8" height="1.4" fill="#d4d4d4" opacity="0.5"/><rect x="24.5" y="50" width="1.0" height="1.4" fill="#da70d6" opacity="0.5"/><rect x="25.5" y="50" width="1.0" height="1.4" fill="#d4d4d4" opacity="0.5"/><rect x="3.9" y="54" width="2.0" height="1.4" fill="#6a9955" opacity="0.5"/><rect x="6.9" y="54" width="3.9" height="1.4" fill="#6a9955" opacity="0.5"/><rect x="11.8" y="54" width="7.8" height="1.4" fill="#6a9955" opacity="0.5"/><rect x="20.6" y="54" width="7.8" height="1.4" fill="#6a9955" opacity="0.5"/><rect x="7.8" y="56" width="2.0" height="1.4" fill="#6a9955" opacity="0.5"/><rect x="10.8" y="56" width="2.9" height="1.4" fill="#6a9955" opacity="0.5"/><rect x="14.7" y="56" width="6.9" height="1.4" fill="#6a9955" opacity="0.5"/><rect x="22.5" y="56" width="7.8" height="1.4" fill="#6a9955" opacity="0.5"/><rect x="3.9" y="58" width="6.9" height="1.4" fill="#d4d4d4" opacity="0.5"/><rect x="11.8" y="58" width="14.7" height="1.4" fill="#d4d4d4" opacity="0.5"/><rect x="27.4" y="58" width="1.0" height="1.4" fill="#d4d4d4" opacity="0.5"/><rect x="29.4" y="58" width="15.7" height="1.4" fill="#dcdcaa" opacity="0.5"/><rect x="45.1" y="58" width="2.0" height="1.4" fill="#da70d6" opacity="0.5"/><rect x="47.0" y="58" width="1.0" height="1.4" fill="#d4d4d4" opacity="0.5"/><rect x="7.8" y="60" width="2.0" height="1.4" fill="#6a9955" opacity="0.5"/><rect x="10.8" y="60" width="2.9" height="1.4" fill="#6a9955" opacity="0.5"/><rect x="14.7" y="60" width="5.9" height="1.4" fill="#6a9955" opacity="0.5"/><rect x="21.6" y="60" width="2.0" height="1.4" fill="#6a9955" opacity="0.5"/><rect x="24.5" y="60" width="3.9" height="1.4" fill="#6a9955" opacity="0.5"/><rect x="29.4" y="60" width="7.8" height="1.4" fill="#6a9955" opacity="0.5"/><rect x="3.9" y="62" width="14.7" height="1.4" fill="#d4d4d4" opacity="0.5"/><rect x="19.6" y="62" width="1.0" height="1.4" fill="#d4d4d4" opacity="0.5"/><rect x="21.6" y="62" width="14.7" height="1.4" fill="#d4d4d4" opacity="0.5"/><rect x="37.2" y="62" width="1.0" height="1.4" fill="#d4d4d4" opacity="0.5"/><rect x="39.2" y="62" width="1.0" height="1.4" fill="#da70d6" opacity="0.5"/><rect x="40.2" y="62" width="15.7" height="1.4" fill="#d4d4d4" opacity="0.5"/><rect x="56.8" y="62" width="1.0" height="1.4" fill="#d4d4d4" opacity="0.5"/><rect x="58.8" y="62" width="8.8" height="1.4" fill="#d4d4d4" opacity="0.5"/><rect x="67.6" y="62" width="1.0" height="1.4" fill="#da70d6" opacity="0.5"/><rect x="68.6" y="62" width="1.0" height="1.4" fill="#d4d4d4" opacity="0.5"/><rect x="7.8" y="64" width="2.0" height="1.4" fill="#6a9955" opacity="0.5"/><rect x="10.8" y="64" width="2.9" height="1.4" fill="#6a9955" opacity="0.5"/><rect x="14.7" y="64" width="2.9" height="1.4" fill="#6a9955" opacity="0.5"/><rect x="18.6" y="64" width="7.8" height="1.4" fill="#6a9955" opacity="0.5"/><rect x="3.9" y="66" width="15.7" height="1.4" fill="#dcdcaa" opacity="0.5"/><rect x="19.6" y="66" width="1.0" height="1.4" fill="#da70d6" opacity="0.5"/><rect x="20.6" y="66" width="14.7" height="1.4" fill="#d4d4d4" opacity="0.5"/><rect x="35.3" y="66" width="1.0" height="1.4" fill="#da70d6" opacity="0.5"/><rect x="36.3" y="66" width="1.0" height="1.4" fill="#d4d4d4" opacity="0.5"/><rect x="3.9" y="68" width="2.0" height="1.4" fill="#6a9955" opacity="0.5"/><rect x="6.9" y="68" width="3.9" height="1.4" fill="#6a9955" opacity="0.5"/><rect x="11.8" y="68" width="7.8" height="1.4" fill="#6a9955" opacity="0.5"/><rect x="20.6" y="68" width="3.9" height="1.4" fill="#6a9955" opacity="0.5"/><rect x="25.5" y="68" width="2.0" height="1.4" fill="#6a9955" opacity="0.5"/><rect x="28.4" y="68" width="3.9" height="1.4" fill="#6a9955" opacity="0.5"/><rect x="33.3" y="68" width="2.9" height="1.4" fill="#6a9955" opacity="0.5"/><rect x="37.2" y="68" width="2.9" height="1.4" fill="#6a9955" opacity="0.5"/><rect x="7.8" y="70" width="2.0" height="1.4" fill="#6a9955" opacity="0.5"/><rect x="10.8" y="70" width="4.9" height="1.4" fill="#6a9955" opacity="0.5"/><rect x="16.7" y="70" width="2.9" height="1.4" fill="#6a9955" opacity="0.5"/><rect x="20.6" y="70" width="2.9" height="1.4" fill="#6a9955" opacity="0.5"/><rect x="24.5" y="70" width="4.9" height="1.4" fill="#6a9955" opacity="0.5"/><rect x="30.4" y="70" width="4.9" height="1.4" fill="#6a9955" opacity="0.5"/><rect x="3.9" y="72" width="12.7" height="1.4" fill="#d4d4d4" opacity="0.5"/><rect x="17.6" y="72" width="1.0" height="1.4" fill="#d4d4d4" opacity="0.5"/><rect x="19.6" y="72" width="6.9" height="1.4" fill="#4ec9b0" opacity="0.5"/><rect x="26.5" y="72" width="2.0" height="1.4" fill="#d4d4d4" opacity="0.5"/><rect x="28.4" y="72" width="3.9" height="1.4" fill="#dcdcaa" opacity="0.5"/><rect x="32.3" y="72" width="1.0" height="1.4" fill="#da70d6" opacity="0.5"/><rect x="33.3" y="72" width="12.7" height="1.4" fill="#d4d4d4" opacity="0.5"/><rect x="46.1" y="72" width="1.0" height="1.4" fill="#d4d4d4" opacity="0.5"/><rect x="48.0" y="72" width="14.7" height="1.4" fill="#d4d4d4" opacity="0.5"/><rect x="62.7" y="72" width="1.0" height="1.4" fill="#da70d6" opacity="0.5"/><rect x="63.7" y="72" width="1.0" height="1.4" fill="#d4d4d4" opacity="0.5"/><rect x="7.8" y="74" width="2.0" height="1.4" fill="#6a9955" opacity="0.5"/><rect x="10.8" y="74" width="6.9" height="1.4" fill="#6a9955" opacity="0.5"/><rect x="18.6" y="74" width="8.8" height="1.4" fill="#6a9955" opacity="0.5"/><rect x="28.4" y="74" width="2.0" height="1.4" fill="#6a9955" opacity="0.5"/><rect x="31.4" y="74" width="5.9" height="1.4" fill="#6a9955" opacity="0.5"/><rect x="38.2" y="74" width="2.0" height="1.4" fill="#6a9955" opacity="0.5"/><rect x="41.2" y="74" width="3.9" height="1.4" fill="#6a9955" opacity="0.5"/><rect x="46.1" y="74" width="2.9" height="1.4" fill="#6a9955" opacity="0.5"/><rect x="50.0" y="74" width="2.9" height="1.4" fill="#6a9955" opacity="0.5"/><rect x="0.0" y="76" width="1.0" height="1.4" fill="#ffd700" opacity="0.5"/></svg>
<!-- status bar -->
<svg class="abs" style="left:14.5px;top:1371.5px" width="15" height="15" viewBox="0 0 16 16"><circle cx="8" cy="8" r="6.300" fill="none" stroke="#ffffff" stroke-width="1.700"/><path d="M5.300 5.300l5.400 5.400M10.700 5.300l-5.400 5.400" stroke="#ffffff" stroke-width="1.600"/></svg>
<span class="t" style="left:32.6px;top:1370.00px;height:22px;line-height:22px;font-size:12px;color:#ffffff;letter-spacing:-0.167px;">0</span>
<svg class="abs" style="left:41.5px;top:1371.5px" width="15" height="15" viewBox="0 0 16 16"><path d="M8 1.800L14.700 14H1.300z" fill="none" stroke="#ffffff" stroke-width="1.700"/><path d="M8 6v4.300M8 11.300v1.400" stroke="#ffffff" stroke-width="1.500"/></svg>
<span class="t" style="left:59.5px;top:1370.00px;height:22px;line-height:22px;font-size:12px;color:#ffffff;letter-spacing:-0.167px;">0</span>
<svg class="abs" style="left:81.3px;top:1371.5px" width="15" height="15" viewBox="0 0 16 16"><path d="M8 1.500c.4 2.200 3.700 4 3.700 7.800A3.700 3.700 0 0 1 8 14.500 3.700 3.700 0 0 1 4.300 9.300c0-1.300.7-2.300 1.400-3 .1 1 .6 1.700 1.200 1.900C6.500 5.500 7.100 3 8 1.500z" fill="#ffffff"/></svg>
<svg class="abs" style="left:1959.0px;top:1371.5px" width="15" height="15" viewBox="0 0 16 16"><path d="M8 1.500c.4 2.200 3.700 4 3.700 7.800A3.700 3.700 0 0 1 8 14.500 3.700 3.700 0 0 1 4.300 9.300c0-1.300.7-2.300 1.400-3 .1 1 .6 1.700 1.200 1.900C6.500 5.500 7.100 3 8 1.500z" fill="#ffffff"/></svg>
<svg class="abs" style="left:1989.1px;top:1371.5px" width="15" height="15" viewBox="0 0 16 16"><rect x="3.500" y="3" width="9" height="11" rx="1" fill="none" stroke="#ffffff" stroke-width="1.400"/><rect x="5.800" y="1.500" width="4.400" height="2.600" fill="#ffffff"/></svg>
<span class="t" style="left:2020.8px;top:1370.00px;height:22px;line-height:22px;font-size:12px;color:#ffffff;letter-spacing:-0.185px;">Screen Reader Optimized</span>
<span class="t" style="left:2173.2px;top:1370.00px;height:22px;line-height:22px;font-size:12px;color:#ffffff;letter-spacing:-0.343px;">Ln 39, Col 2</span>
<span class="t" style="left:2250.8px;top:1370.00px;height:22px;line-height:22px;font-size:12px;color:#ffffff;letter-spacing:-0.450px;">Tab Size: 4</span>
<span class="t" style="left:2321.8px;top:1370.00px;height:22px;line-height:22px;font-size:12px;color:#ffffff;letter-spacing:-0.616px;">UTF-8</span>
<span class="t" style="left:2369.1px;top:1370.00px;height:22px;line-height:22px;font-size:12px;color:#ffffff;letter-spacing:-1.403px;">CRLF</span>
<span class="t" style="left:2410.9px;top:1370.00px;height:22px;line-height:22px;font-size:12px;color:#ffffff;letter-spacing:0.189px;">C++</span>
<span class="t" style="left:2451.4px;top:1370.00px;height:22px;line-height:22px;font-size:12px;color:#ffffff;letter-spacing:-0.125px;">Win32</span>
<svg class="abs" style="left:2500.6px;top:1371.5px" width="15" height="15" viewBox="0 0 16 16"><path d="M5.500 2h8.500v6.500h-2.500l-2.500 2.500v-2.500" fill="none" stroke="#ffffff" stroke-width="1.700"/><circle cx="5" cy="7" r="2.200" fill="none" stroke="#ffffff" stroke-width="1.700"/><path d="M1.500 14.500c.3-2.600 1.700-3.800 3.500-3.800s3.200 1.200 3.500 3.800" fill="none" stroke="#ffffff" stroke-width="1.700"/></svg>
<svg class="abs" style="left:2530.7px;top:1371.5px" width="15" height="15" viewBox="0 0 16 16"><path d="M4 11V7a4 4 0 0 1 8 0v4l1 1.500H3z" fill="none" stroke="#ffffff" stroke-width="1.800"/><path d="M6.500 13.800a1.500 1.500 0 0 0 3 0" fill="none" stroke="#ffffff" stroke-width="1.200"/></svg>
</div>
</div></body></html>
